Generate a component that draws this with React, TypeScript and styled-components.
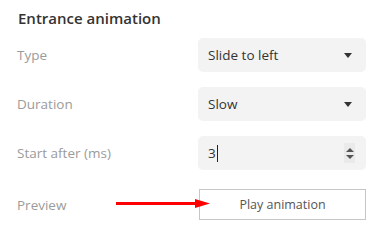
import React from 'react';
import styled, { createGlobalStyle } from 'styled-components';

const GlobalStyle = createGlobalStyle`
  html, body {
    margin: 0;
    padding: 0;
    background: #ffffff;
  }
  body {
    font-family: 'Open Sans', 'Noto Sans', 'Liberation Sans', sans-serif;
  }
`;

const Panel = styled.div`
  position: relative;
  width: 386px;
  height: 232px;
  box-sizing: border-box;
  padding: 8px 0 0 17px;
`;

const Title = styled.h2`
  margin: 0 0 10px 1px;
  font-size: 15px;
  font-weight: 600;
  line-height: 20px;
  color: #333333;
`;

const Form = styled.div`
  display: grid;
  grid-template-columns: 181px 168px;
  grid-auto-rows: 34px;
  row-gap: 15px;
`;

const Label = styled.div`
  display: flex;
  align-items: center;
  font-size: 13.5px;
  color: #9b9b9b;
`;

const Field = styled.div`
  display: flex;
  align-items: center;
  justify-content: space-between;
  box-sizing: border-box;
  padding: 0 14px 0 10px;
  background: #f3f3f3;
  border-radius: 5px;
  font-size: 13.5px;
  color: #333333;
`;

const Value = styled.span`
  display: flex;
  align-items: center;
`;

const Caret = styled.span`
  display: inline-block;
  width: 1px;
  height: 17px;
  margin-left: 1px;
  background: #222222;
`;

const Spinner = styled.div`
  display: flex;
  flex-direction: column;
  align-items: center;
  justify-content: center;
  gap: 3px;
  width: 11px;
  height: 20px;
  margin-right: -3px;
  background: #eaeaea;
`;

const PreviewRow = styled.div<{ $offset: number }>`
  display: contents;
  & > * {
    margin-top: ${p => p.$offset}px;
  }
`;

const PlayButton = styled.button`
  height: 31px;
  margin-left: 1px;
  box-sizing: border-box;
  border: 1px solid #c6c6c6;
  background: #ffffff;
  font-family: inherit;
  font-size: 12.5px;
  color: #555555;
  cursor: pointer;
`;

const PreviewLabel = styled(Label)`
  height: 31px;
`;

const Arrow = styled.svg`
  position: absolute;
  left: 116px;
  top: 199px;
`;

const DownTriangle = () => (
  <svg width="8" height="5" viewBox="0 0 8 5">
    <path d="M0 0 H8 L4 5 Z" fill="#333333" />
  </svg>
);

const App: React.FC = () => {
  return (
    <>
      <GlobalStyle />
      <Panel>
        <Title>Entrance animation</Title>
        <Form>
          <Label>Type</Label>
          <Field>
            <Value>Slide to left</Value>
            <DownTriangle />
          </Field>
          <Label>Duration</Label>
          <Field>
            <Value>Slow</Value>
            <DownTriangle />
          </Field>
          <Label>Start after (ms)</Label>
          <Field>
            <Value>
              3<Caret />
            </Value>
            <Spinner>
              <svg width="8" height="4" viewBox="0 0 8 4">
                <path d="M0 4 H8 L4 0 Z" fill="#555555" />
              </svg>
              <svg width="8" height="4" viewBox="0 0 8 4">
                <path d="M0 0 H8 L4 4 Z" fill="#555555" />
              </svg>
            </Spinner>
          </Field>
          <PreviewRow $offset={4}>
            <PreviewLabel>Preview</PreviewLabel>
            <PlayButton>Play animation</PlayButton>
          </PreviewRow>
        </Form>
        <Arrow width="94" height="9" viewBox="0 0 94 9">
          <line x1="0" y1="4.5" x2="80" y2="4.5" stroke="#ff0000" strokeWidth="3" />
          <path d="M79 0 L94 4.5 L79 9 Z" fill="#ff0000" />
        </Arrow>
      </Panel>
    </>
  );
};

export default App;
